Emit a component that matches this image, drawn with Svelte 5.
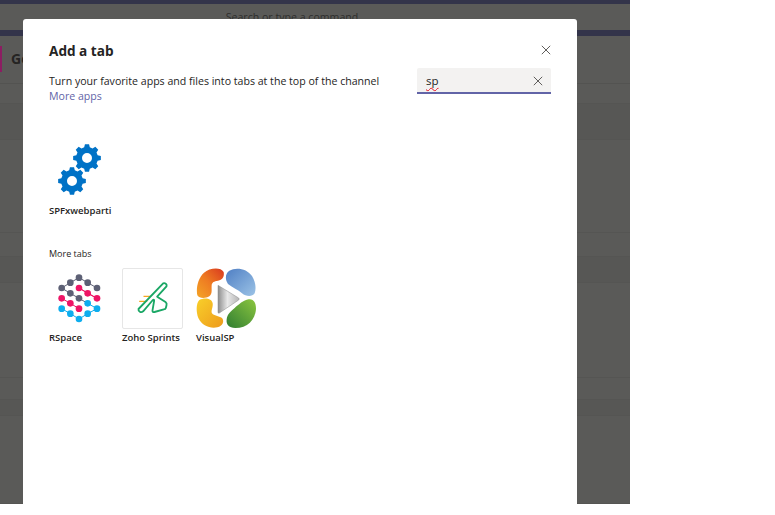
<script>
  function gear(cx, cy, ro, ri, hole, teeth = 8) {
    const step = (Math.PI * 2) / teeth;
    const pts = [];
    for (let i = 0; i < teeth; i++) {
      const a = i * step - Math.PI / 2;
      const w = step * 0.22;
      for (const [r, d] of [[ri, -w * 1.5], [ro, -w * 0.85], [ro, w * 0.85], [ri, w * 1.5]]) {
        pts.push(`${(cx + r * Math.cos(a + d)).toFixed(2)} ${(cy + r * Math.sin(a + d)).toFixed(2)}`);
      }
    }
    const ring = `M${cx - hole} ${cy}a${hole} ${hole} 0 1 0 ${hole * 2} 0a${hole} ${hole} 0 1 0 ${-hole * 2} 0Z`;
    return `M${pts.join('L')}Z${ring}`;
  }
  const gears = [gear(38, 17, 14, 11, 5), gear(23, 40, 14, 11, 5)];

  const nodes = {
    a: [117, 53, 'g'], b: [91, 68, 'g'], c: [143, 68, 'g'], d: [65, 84, 'g'], e: [171, 84, 'g'], f: [91, 100, 'g'], h: [117, 115, 'g'],
    i: [117, 84, 'p'], j: [143, 100, 'p'], k: [171, 115, 'p'], l: [65, 115, 'p'], m: [91, 130, 'p'], n: [117, 146, 'p'],
    o: [143, 130, 'b'], q: [171, 146, 'b'], r: [143, 161, 'b'], s: [117, 177, 'b'], t: [91, 161, 'b'], u: [65, 146, 'b']
  };
  const colors = { g: '#5d6075', p: '#ee1566', b: '#0dadee' };
  const links = ['ab', 'ac', 'bd', 'ce', 'df', 'fh', 'ij', 'jk', 'lm', 'mn', 'ik', 'oq', 'qr', 'rs', 'st', 'tu', 'ho'];
  const rows = [
    { h: 20 }, { h: 36, dark: true }, { h: 93 }, { h: 24 }, { h: 26, dark: true }, { h: 95 }, { h: 22 }, { h: 16, dark: true }, { h: 88 }
  ];
</script>

<div class="page">
  <div class="backdrop">
    <div class="topstrip"></div>
    <div class="searchbar"><span>Search or type a command</span></div>
    <div class="navstrip"></div>
    <div class="channel">
      <div class="teamicon"></div>
      <b>Ge</b>
    </div>
    <div class="rows">
      {#each rows as row}
        <div class="row" class:dark={row.dark} style="height:{row.h}px"></div>
      {/each}
    </div>
  </div>

  <div class="modal">
    <button class="close" aria-label="Close">
      <svg viewBox="0 0 10 10" width="10" height="10"><path d="M.8.8l8.4 8.4M9.2.8L.8 9.2" /></svg>
    </button>
    <h1>Add a tab</h1>
    <div class="intro">
      <p>Turn your favorite apps and files into tabs at the top of the channel<br /><a href="#more">More apps</a></p>
      <div class="search">
        <span class="query">sp</span>
        <svg viewBox="0 0 10 10" width="10" height="10"><path d="M.8.8l8.4 8.4M9.2.8L.8 9.2" /></svg>
      </div>
    </div>

    <div class="tile first">
      <div class="art">
        <svg viewBox="0 0 60 60" width="60" height="60"><path fill="#0072c6" fill-rule="evenodd" d={gears[0]} /><path fill="#0072c6" fill-rule="evenodd" d={gears[1]} /></svg>
      </div>
      <span>SPFxwebparti</span>
    </div>

    <h2>More tabs</h2>
    <div class="tiles">
      <div class="tile">
        <div class="art">
          <svg viewBox="27 24 180 180" width="60" height="60">
            {#each links as l}
              <line x1={nodes[l[0]][0]} y1={nodes[l[0]][1]} x2={nodes[l[1]][0]} y2={nodes[l[1]][1]} stroke={colors[nodes[l[0]][2]]} stroke-width="3" />
            {/each}
            {#each Object.values(nodes) as n}
              <circle cx={n[0]} cy={n[1]} r="10" fill={colors[n[2]]} />
            {/each}
          </svg>
        </div>
        <span>RSpace</span>
      </div>
      <div class="tile">
        <div class="art boxed">
          <svg viewBox="15 23 174 177">
            <path d="M62 120h24M75 105h22" stroke="#f5a623" stroke-width="4" fill="none" />
            <path d="M60 143L134 66q4-2 8 1t2 8L116 106l25 16q5 4 3 10l-2 8q-1 4-6 4l-28 8q-7 1-6-5l5-29q0-4-4-2L74 150q-5 4-10 1t-4-8Z" fill="none" stroke="#1aa765" stroke-width="5.5" stroke-linejoin="round" />
          </svg>
        </div>
        <span>Zoho Sprints</span>
      </div>
      <div class="tile">
        <div class="art">
          <svg viewBox="18 18 180 183" width="60" height="61">
            <defs>
              <linearGradient id="or" x1="1" y1="0" x2="0" y2="1"><stop offset="0" stop-color="#d8381f" /><stop offset=".5" stop-color="#ee7a22" /><stop offset="1" stop-color="#f4a526" /></linearGradient>
              <linearGradient id="ye" x1="0" y1="0" x2="1" y2="1"><stop offset="0" stop-color="#f8cf2a" /><stop offset="1" stop-color="#ee9b1c" /></linearGradient>
              <linearGradient id="bl" x1="0" y1="0" x2="1" y2="1"><stop offset="0" stop-color="#4f7fc4" /><stop offset="1" stop-color="#9cc3e6" /></linearGradient>
              <linearGradient id="gr" x1="1" y1="0" x2="0" y2="1"><stop offset="0" stop-color="#8cc63f" /><stop offset="1" stop-color="#2f7d32" /></linearGradient>
              <linearGradient id="pl" x1="0" y1="0" x2="1" y2="0"><stop offset="0" stop-color="#8d8d8d" /><stop offset=".45" stop-color="#e8e8e8" /><stop offset="1" stop-color="#b5b5b5" /></linearGradient>
            </defs>
            <path fill="url(#or)" d="M101 30C103 42 100 54 84 56C72 58 66 60 65 70C64 84 68 94 58 103C46 110 28 110 22 100C18 82 22 50 42 32C58 18 92 14 101 30Z" />
            <path fill="url(#bl)" d="M118 26C138 14 172 20 186 42C197 60 199 80 194 94C186 106 168 104 156 94C144 82 128 78 114 66C104 52 106 34 118 26Z" />
            <path fill="url(#ye)" d="M28 114C42 106 66 108 68 124C70 136 62 146 66 154C72 162 86 162 96 168C104 178 98 192 82 196C60 200 36 192 25 168C18 150 18 124 28 114Z" />
            <path fill="url(#gr)" d="M176 112C192 110 198 124 198 140C196 174 172 198 136 198C116 198 108 188 110 172C112 156 122 148 134 138C146 128 160 114 176 112Z" />
            <path fill="url(#pl)" stroke="#8a8a8a" stroke-width="1.5" d="M84 70L146 108Q149 111 146 114L88 153Q84 155 84 150Z" />
          </svg>
        </div>
        <span>VisualSP</span>
      </div>
    </div>
  </div>
</div>

<style>
  :global(body) {
    margin: 0;
    background: #fff;
  }
  .page {
    position: relative;
    width: 775px;
    height: 515px;
    overflow: hidden;
    font-family: "Open Sans", "Noto Sans", sans-serif;
    color: #252423;
  }
  .backdrop {
    width: 630px;
    height: 504px;
    background: #5a5a58;
    display: flex;
    flex-direction: column;
    overflow: hidden;
  }
  .topstrip {
    height: 4px;
    flex: none;
    background: #33344a;
  }
  .searchbar {
    height: 26px;
    flex: none;
    display: flex;
    justify-content: center;
    align-items: flex-start;
    padding-top: 6px;
    box-sizing: border-box;
    font-size: 10.6px;
    color: #2e2e2d;
    padding-right: 46px;
  }
  .navstrip {
    height: 6px;
    flex: none;
    background: #33344a;
  }
  .channel {
    height: 48px;
    box-sizing: border-box;
    border-bottom: 1px solid #535351;
    flex: none;
    display: flex;
    align-items: center;
    gap: 9px;
    padding-bottom: 2px;
    font-size: 14px;
    color: #252423;
  }
  .teamicon {
    width: 2px;
    height: 26px;
    background: #8c1d62;
  }
  .rows {
    flex: none;
  }
  .row {
    box-sizing: border-box;
    border-bottom: 1px solid #555553;
  }
  .row.dark {
    background: #575755;
  }
  .modal {
    position: absolute;
    left: 23px;
    top: 19px;
    width: 554px;
    height: 485px;
    box-sizing: border-box;
    padding: 23px 26px 0;
    background: #fff;
    border-radius: 3px 3px 0 0;
  }
  h1 {
    margin: 0;
    font-size: 13.6px;
    line-height: 17px;
    font-weight: 700;
  }
  .close {
    position: absolute;
    right: 26px;
    top: 26px;
    border: 0;
    padding: 0;
    background: none;
    width: 10px;
    height: 10px;
    display: block;
  }
  svg {
    display: block;
  }
  .close path,
  .search path {
    stroke: #605e5c;
    stroke-width: 1;
    fill: none;
  }
  .intro {
    display: flex;
    justify-content: space-between;
    margin-top: 9px;
  }
  p {
    margin: 6px 0 0;
    font-size: 10.6px;
    line-height: 15px;
    width: 340px;
    white-space: nowrap;
  }
  a {
    color: #6264a7;
    text-decoration: none;
  }
  .search {
    width: 134px;
    height: 26px;
    box-sizing: border-box;
    background: #f3f2f1;
    border-bottom: 2px solid #6264a7;
    border-radius: 2px 2px 0 0;
    padding: 1px 8px 0 9px;
    display: flex;
    align-items: center;
    justify-content: space-between;
  }
  .query {
    font-size: 11.5px;
    line-height: 16px;
    color: #252423;
    text-decoration: underline wavy #e81123 1px;
    text-decoration-skip-ink: none;
    text-underline-offset: 2px;
  }
  .tile {
    display: flex;
    flex-direction: column;
    gap: 2px;
  }
  .tile.first {
    margin-top: 37px;
  }
  .tile span {
    font-size: 9.5px;
    line-height: 13px;
    font-weight: 600;
    white-space: nowrap;
  }
  .art {
    width: 60px;
    height: 61px;
    box-sizing: border-box;
  }
  .boxed {
    width: 61px;
    border: 1px solid #e6e6e6;
    border-radius: 2px;
  }
  .boxed svg {
    width: 59px;
    height: 59px;
  }
  h2 {
    margin: 30px 0 8px;
    font-size: 9px;
    line-height: 13px;
    font-weight: 400;
  }
  .tiles {
    display: grid;
    grid-template-columns: 73px 74px auto;
  }
</style>
